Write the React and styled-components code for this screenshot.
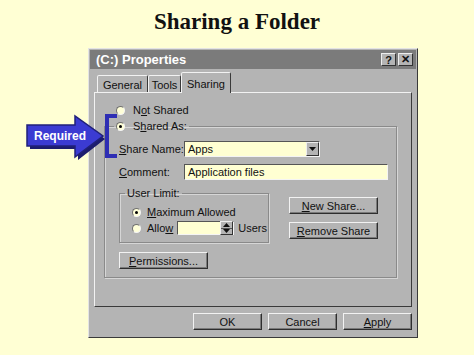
import React from "react";
import styled, { createGlobalStyle } from "styled-components";

const GlobalStyle = createGlobalStyle`
  html, body {
    margin: 0;
    padding: 0;
    background: #ffffd4;
  }
`;

const Page = styled.div`
  position: relative;
  width: 474px;
  height: 355px;
  overflow: hidden;
  font-family: "Liberation Sans", Arial, sans-serif;
  font-size: 10.5px;
  color: #111;
`;

const Heading = styled.h1`
  margin: 0;
  padding-top: 9px;
  height: 26px;
  line-height: 26px;
  text-align: center;
  font-family: "Liberation Serif", "Times New Roman", serif;
  font-size: 23px;
  font-weight: bold;
  color: #111;
`;

const Dialog = styled.div`
  margin: 13px 0 0 88px;
  width: 330px;
  box-sizing: border-box;
  background: #b4b4b4;
  border: 1px solid;
  border-color: #e4e4e4 #3a3a3a #3a3a3a #e4e4e4;
  padding: 1px;
`;

const TitleBar = styled.div`
  display: flex;
  align-items: center;
  height: 19px;
  padding: 0 3px 0 6px;
  background: #7b7b7b;
  color: #fff;
  font-size: 13px;
  font-weight: bold;
`;

const TitleText = styled.span`
  flex: 1;
`;

const CaptionButton = styled.span`
  display: flex;
  align-items: center;
  justify-content: center;
  width: 15px;
  height: 13px;
  margin-left: 2px;
  box-sizing: border-box;
  background: #b4b4b4;
  border: 1px solid;
  border-color: #eee #333 #333 #eee;
  color: #111;
  font-size: 11px;
  font-weight: bold;
`;

const Body = styled.div`
  padding: 3px 4px 6px;
`;

const Tabs = styled.div`
  position: relative;
  z-index: 1;
  display: flex;
  align-items: flex-end;
  height: 20px;
  padding-left: 3px;
`;

const Tab = styled.div`
  display: flex;
  align-items: center;
  justify-content: center;
  box-sizing: border-box;
  width: ${(p) => p.width}px;
  height: ${(p) => (p.active ? 21 : 17)}px;
  margin-bottom: ${(p) => (p.active ? -1 : 0)}px;
  padding-top: 1px;
  background: #b4b4b4;
  border: 1px solid;
  border-bottom: none;
  border-color: #f2f2f2 #3a3a3a transparent #f2f2f2;
  border-radius: 2px 2px 0 0;
  font-size: 11px;
`;

const Panel = styled.div`
  box-sizing: border-box;
  height: 215px;
  padding-top: 9px;
  border: 1px solid;
  border-color: #f2f2f2 #3a3a3a #3a3a3a #f2f2f2;
`;

const RadioRow = styled.div`
  display: flex;
  align-items: center;
  gap: ${(p) => p.gap || 8}px;
  height: 16px;
  padding-left: ${(p) => p.indent || 0}px;
  font-size: 11px;
  white-space: nowrap;
`;

const Radio = styled.span`
  position: relative;
  flex: none;
  width: 9px;
  height: 9px;
  box-sizing: border-box;
  border-radius: 50%;
  background: #ffffd8;
  border: 1px solid;
  border-color: #707070 #f4f4f4 #f4f4f4 #707070;

  &::after {
    content: "";
    display: ${(p) => (p.checked ? "block" : "none")};
    position: absolute;
    left: 2px;
    top: 2px;
    width: 3px;
    height: 3px;
    border-radius: 50%;
    background: #000;
  }
`;

const GroupBox = styled.fieldset`
  box-sizing: border-box;
  flex: none;
  width: ${(p) => p.width}px;
  min-width: 0;
  margin: ${(p) => p.margin || 0};
  padding: ${(p) => p.pad};
  border: 1px solid #8a8a8a;
  box-shadow: inset 1px 1px 0 #d6d6d6, 1px 1px 0 #d6d6d6;
`;

const Legend = styled.legend`
  margin-left: ${(p) => p.offset}px;
  padding: 0 2px;
  font-size: 11px;
`;

const FieldRow = styled.div`
  display: flex;
  align-items: center;
  height: 16px;
  margin-top: 7px;
`;

const FieldLabel = styled.span`
  width: 65px;
  font-size: 11px;
`;

const Field = styled.div`
  display: flex;
  flex: none;
  align-items: center;
  justify-content: space-between;
  box-sizing: border-box;
  width: ${(p) => p.width}px;
  height: ${(p) => p.height || 16}px;
  padding-left: 3px;
  background: #ffffd2;
  border: 1px solid;
  border-color: #555 #f4f4f4 #f4f4f4 #555;
  font-size: 11px;
`;

const DropButton = styled.span`
  display: flex;
  align-items: center;
  justify-content: center;
  width: 13px;
  height: 14px;
  box-sizing: border-box;
  background: #b4b4b4;
  border: 1px solid;
  border-color: #eee #333 #333 #eee;
`;

const SpinButtons = styled.span`
  display: flex;
  flex-direction: column;
  width: 13px;
  height: 14px;
  box-sizing: border-box;
  background: #b4b4b4;
  border: 1px solid;
  border-color: #eee #333 #333 #eee;

  & > span {
    flex: 1;
    display: flex;
    align-items: center;
    justify-content: center;
  }
  & > span + span {
    border-top: 1px solid #555;
  }
`;

const Lower = styled.div`
  display: flex;
  align-items: flex-start;
  margin-top: 7px;
`;

const SideButtons = styled.div`
  display: flex;
  flex-direction: column;
  gap: 8px;
  margin-left: 20px;
  padding-top: 10px;
`;

const Button = styled.div`
  display: flex;
  align-items: center;
  justify-content: center;
  box-sizing: border-box;
  width: ${(p) => p.width || 89}px;
  height: 17px;
  margin-top: ${(p) => p.top || 0}px;
  background: #b4b4b4;
  border: 1px solid;
  border-color: #f2f2f2 #2e2e2e #2e2e2e #f2f2f2;
  box-shadow: inset -1px -1px 0 #7a7a7a;
  font-size: 11px;
`;

const Footer = styled.div`
  display: flex;
  justify-content: flex-end;
  gap: 6px;
  margin-top: 6px;
`;

const Callout = styled.div`
  position: absolute;
  left: 24px;
  top: 112px;
  width: 100px;
  height: 52px;
`;

const CalloutText = styled.span`
  position: absolute;
  left: 10px;
  top: 17px;
  color: #fff;
  font-size: 12px;
  font-weight: bold;
`;

const Bracket = styled.svg`
  position: absolute;
  left: 100px;
  top: 111px;
`;

const Triangle = ({ up }) => (
  <svg width="7" height="4" viewBox="0 0 7 4">
    <path d={up ? "M0 4 L3.5 0 L7 4 Z" : "M0 0 L7 0 L3.5 4 Z"} fill="#111" />
  </svg>
);

export default function App() {
  return (
    <Page>
      <GlobalStyle />
      <Heading>Sharing a Folder</Heading>

      <Dialog>
        <TitleBar>
          <TitleText>(C:) Properties</TitleText>
          <CaptionButton>?</CaptionButton>
          <CaptionButton>✕</CaptionButton>
        </TitleBar>
        <Body>
          <Tabs>
            <Tab width={51}>General</Tab>
            <Tab width={33}>Tools</Tab>
            <Tab width={50} active>
              Sharing
            </Tab>
          </Tabs>
          <Panel>
            <RadioRow indent={21}>
              <Radio />
              <span>
                N<u>o</u>t Shared
              </span>
            </RadioRow>
            <GroupBox width={293} margin="0 0 0 9px" pad="0 0 8px 14px">
              <Legend offset={-5}>
                <RadioRow>
                  <Radio checked />
                  <span>
                    S<u>h</u>ared As:
                  </span>
                </RadioRow>
              </Legend>
              <FieldRow>
                <FieldLabel>
                  <u>S</u>hare Name:
                </FieldLabel>
                <Field width={136}>
                  Apps
                  <DropButton>
                    <Triangle />
                  </DropButton>
                </Field>
              </FieldRow>
              <FieldRow>
                <FieldLabel>
                  <u>C</u>omment:
                </FieldLabel>
                <Field width={204}>Application files</Field>
              </FieldRow>
              <Lower>
                <GroupBox width={150} pad="5px 0 6px 12px">
                  <Legend offset={-7}>User Limit:</Legend>
                  <RadioRow gap={6}>
                    <Radio checked />
                    <span>
                      <u>M</u>aximum Allowed
                    </span>
                  </RadioRow>
                  <RadioRow gap={4}>
                    <Radio />
                    <span style={{ marginLeft: 2 }}>
                      Allo<u>w</u>
                    </span>
                    <Field width={57} height={14}>
                      <span />
                      <SpinButtons>
                        <span>
                          <Triangle up />
                        </span>
                        <span>
                          <Triangle />
                        </span>
                      </SpinButtons>
                    </Field>
                    <span>Users</span>
                  </RadioRow>
                </GroupBox>
                <SideButtons>
                  <Button>
                    <u>N</u>ew Share...
                  </Button>
                  <Button>
                    <u>R</u>emove Share
                  </Button>
                </SideButtons>
              </Lower>
              <Button top={9}>
                <u>P</u>ermissions...
              </Button>
            </GroupBox>
          </Panel>
          <Footer>
            <Button width={69}>OK</Button>
            <Button width={69}>Cancel</Button>
            <Button width={69}>
              <u>A</u>pply
            </Button>
          </Footer>
        </Body>
      </Dialog>

      <Callout>
        <svg width="100" height="52" viewBox="0 0 100 52">
          <path
            d="M6 16 H54 V7 L81 27 L54 48 V37 H6 Z"
            fill="#1c1c6e"
          />
          <path
            d="M3 13 H51 V4 L79 24 L51 45 V34 H3 Z"
            fill="#3b3bd2"
            stroke="#20207a"
            strokeWidth="1.5"
          />
        </svg>
        <CalloutText>Required</CalloutText>
      </Callout>

      <Bracket width="20" height="50" viewBox="0 0 20 50">
        <path
          d="M17 5 H7 V45 H17"
          fill="none"
          stroke="#2e2eb4"
          strokeWidth="4"
        />
      </Bracket>
    </Page>
  );
}
